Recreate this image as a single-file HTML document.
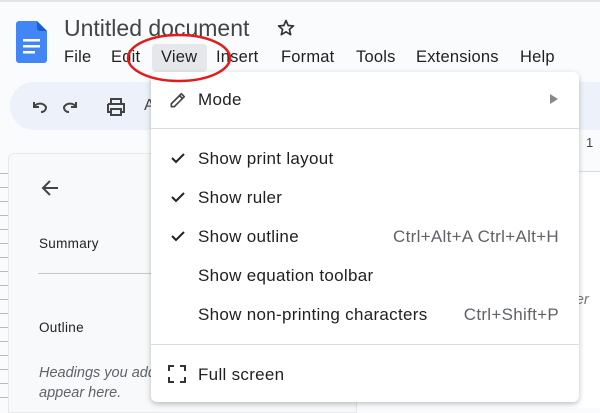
<!DOCTYPE html>
<html><head><style>
*{margin:0;padding:0;box-sizing:border-box}
body{width:600px;height:408px;overflow:hidden;background:#f9fbfd;font-family:"Liberation Sans",Arial,sans-serif;position:relative;color:#1f1f1f}
.a{position:absolute;white-space:nowrap}
.menu span{position:absolute;top:48px;font-size:16.5px;color:#1f1f1f;letter-spacing:.2px}
.it{position:absolute;left:198px;font-size:17px;letter-spacing:.3px;color:#1f1f1f;line-height:20px}
.sc{position:absolute;right:41px;font-size:17px;letter-spacing:.3px;color:#5f6368;line-height:20px}
.ck{position:absolute;left:170px;width:16px;height:16px}
</style></head><body>
<div class="a" style="left:0;top:0;width:600px;height:2px;background:#e3e3e3"></div>
<svg class="a" style="left:16px;top:21px" width="31" height="42" viewBox="0 0 31 42">
<path d="M3 0h18l10 10v29a3 3 0 0 1-3 3H3a3 3 0 0 1-3-3V3a3 3 0 0 1 3-3z" fill="#4285f4"/>
<path d="M21 0l10 10h-7a3 3 0 0 1-3-3z" fill="#1a5fd0"/>
<rect x="7" y="18" width="17" height="2.5" fill="#fff"/><rect x="7" y="24" width="17" height="2.5" fill="#fff"/><rect x="7" y="30" width="12" height="2.5" fill="#fff"/>
</svg>
<div class="a" style="left:64px;top:15px;font-size:23px;color:#444">Untitled document</div>
<svg class="a" style="left:276px;top:18px" width="20" height="20" viewBox="0 0 24 24"><path d="M12 3l2.6 6 6.4.5-4.9 4.2 1.5 6.3L12 16.6 6.4 20l1.5-6.3L3 9.5l6.4-.5z" fill="none" stroke="#333" stroke-width="2" stroke-linejoin="round"/></svg>
<div class="a" style="left:152px;top:44px;width:55px;height:28px;background:#e5e7ea;border-radius:4px"></div>
<div class="menu">
<span style="left:64px">File</span><span style="left:111px">Edit</span><span style="left:161px">View</span><span style="left:216px">Insert</span><span style="left:281px">Format</span><span style="left:356px">Tools</span><span style="left:416px">Extensions</span><span style="left:520px">Help</span>
</div>
<div class="a" style="left:10px;top:82px;width:620px;height:48px;background:#edf2fa;border-radius:24px"></div>
<svg class="a" style="left:30px;top:96px" width="110" height="20" viewBox="0 0 110 20" fill="none" stroke="#444" stroke-width="2">
<path d="M4 6v5h5M4 11c2-4 9-5 12 0 0 3-2 5-5 5"/>
<path d="M46 6v5h-5M46 11c-2-4-9-5-12 0 0 3 2 5 5 5"/>
<path d="M81 8V3h10v5M78 8h16v8h-3M81 16h-3V8M81 13h10v6H81z"/>
</svg>
<div class="a" style="left:144px;top:97px;font-size:16px;color:#444">A</div>
<div class="a" style="left:357px;top:130px;width:243px;height:42px;background:#f9fbfd;border-bottom:1px solid #dadce0"></div>
<div class="a" style="left:586px;top:135px;font-size:13px;color:#444">1</div>
<div class="a" style="left:357px;top:172px;width:243px;height:236px;background:#fff"></div>
<div class="a" style="left:568px;top:291px;font-size:15px;font-style:italic;color:#777">ser</div>
<div class="a" style="left:0;top:160px;width:8px;height:248px;background:repeating-linear-gradient(#f9fbfd 0 13px,#bbb 13px 14px)"></div>
<div class="a" style="left:8px;top:153px;width:349px;height:260px;background:#f8f9fa;border:1px solid #e6e8eb;border-radius:6px 0 0 0"></div>
<svg class="a" style="left:38px;top:176px" width="24" height="24" viewBox="0 0 24 24"><path d="M20 12H5M12 5l-7 7 7 7" fill="none" stroke="#444" stroke-width="2"/></svg>
<div class="a" style="left:39px;top:236px;font-size:13.5px;letter-spacing:.3px;color:#1f1f1f">Summary</div>
<div class="a" style="left:38px;top:273px;width:120px;height:1px;background:#c4c7c5"></div>
<div class="a" style="left:39px;top:320px;font-size:13.5px;letter-spacing:.3px;color:#1f1f1f">Outline</div>
<div class="a" style="left:39px;top:363px;font-size:14.5px;font-style:italic;color:#5f6368;line-height:20px">Headings you add<br>appear here.</div>
<div class="a" style="left:151px;top:72px;width:428px;height:330px;background:#fff;border-radius:6px;box-shadow:0 2px 6px rgba(0,0,0,.25)"></div>
<svg class="a" style="left:168px;top:90px" width="20" height="20" viewBox="0 0 24 24"><path d="M4 20v-3.5L16 4.5l3.5 3.5L7.5 20zM14 7l3 3" fill="none" stroke="#444" stroke-width="2" stroke-linejoin="round"/></svg>
<div class="it" style="top:90px">Mode</div>
<div class="a" style="left:550px;top:94px;width:0;height:0;border-left:8px solid #888;border-top:5px solid transparent;border-bottom:5px solid transparent"></div>
<div class="a" style="left:151px;top:128px;width:428px;height:1px;background:#dadce0"></div>
<svg class="ck" style="top:150px" viewBox="0 0 16 16"><path d="M2 8l4 4 8-8" fill="none" stroke="#222" stroke-width="2"/></svg>
<div class="it" style="top:149px">Show print layout</div>
<svg class="ck" style="top:189px" viewBox="0 0 16 16"><path d="M2 8l4 4 8-8" fill="none" stroke="#222" stroke-width="2"/></svg>
<div class="it" style="top:188px">Show ruler</div>
<svg class="ck" style="top:228px" viewBox="0 0 16 16"><path d="M2 8l4 4 8-8" fill="none" stroke="#222" stroke-width="2"/></svg>
<div class="it" style="top:227px">Show outline</div>
<div class="sc" style="top:227px">Ctrl+Alt+A Ctrl+Alt+H</div>
<div class="it" style="top:266px">Show equation toolbar</div>
<div class="it" style="top:305px">Show non-printing characters</div>
<div class="sc" style="top:305px">Ctrl+Shift+P</div>
<div class="a" style="left:151px;top:344px;width:428px;height:1px;background:#dadce0"></div>
<svg class="a" style="left:168px;top:365px" width="18" height="18" viewBox="0 0 18 18"><path d="M1 6V1h5M12 1h5v5M17 12v5h-5M6 17H1v-5" fill="none" stroke="#333" stroke-width="2"/></svg>
<div class="it" style="top:365px">Full screen</div>
<svg class="a" style="left:125px;top:30px" width="110" height="56"><ellipse cx="54" cy="28" rx="51" ry="23" fill="none" stroke="#e21b1b" stroke-width="2.5"/></svg>
</body></html>
